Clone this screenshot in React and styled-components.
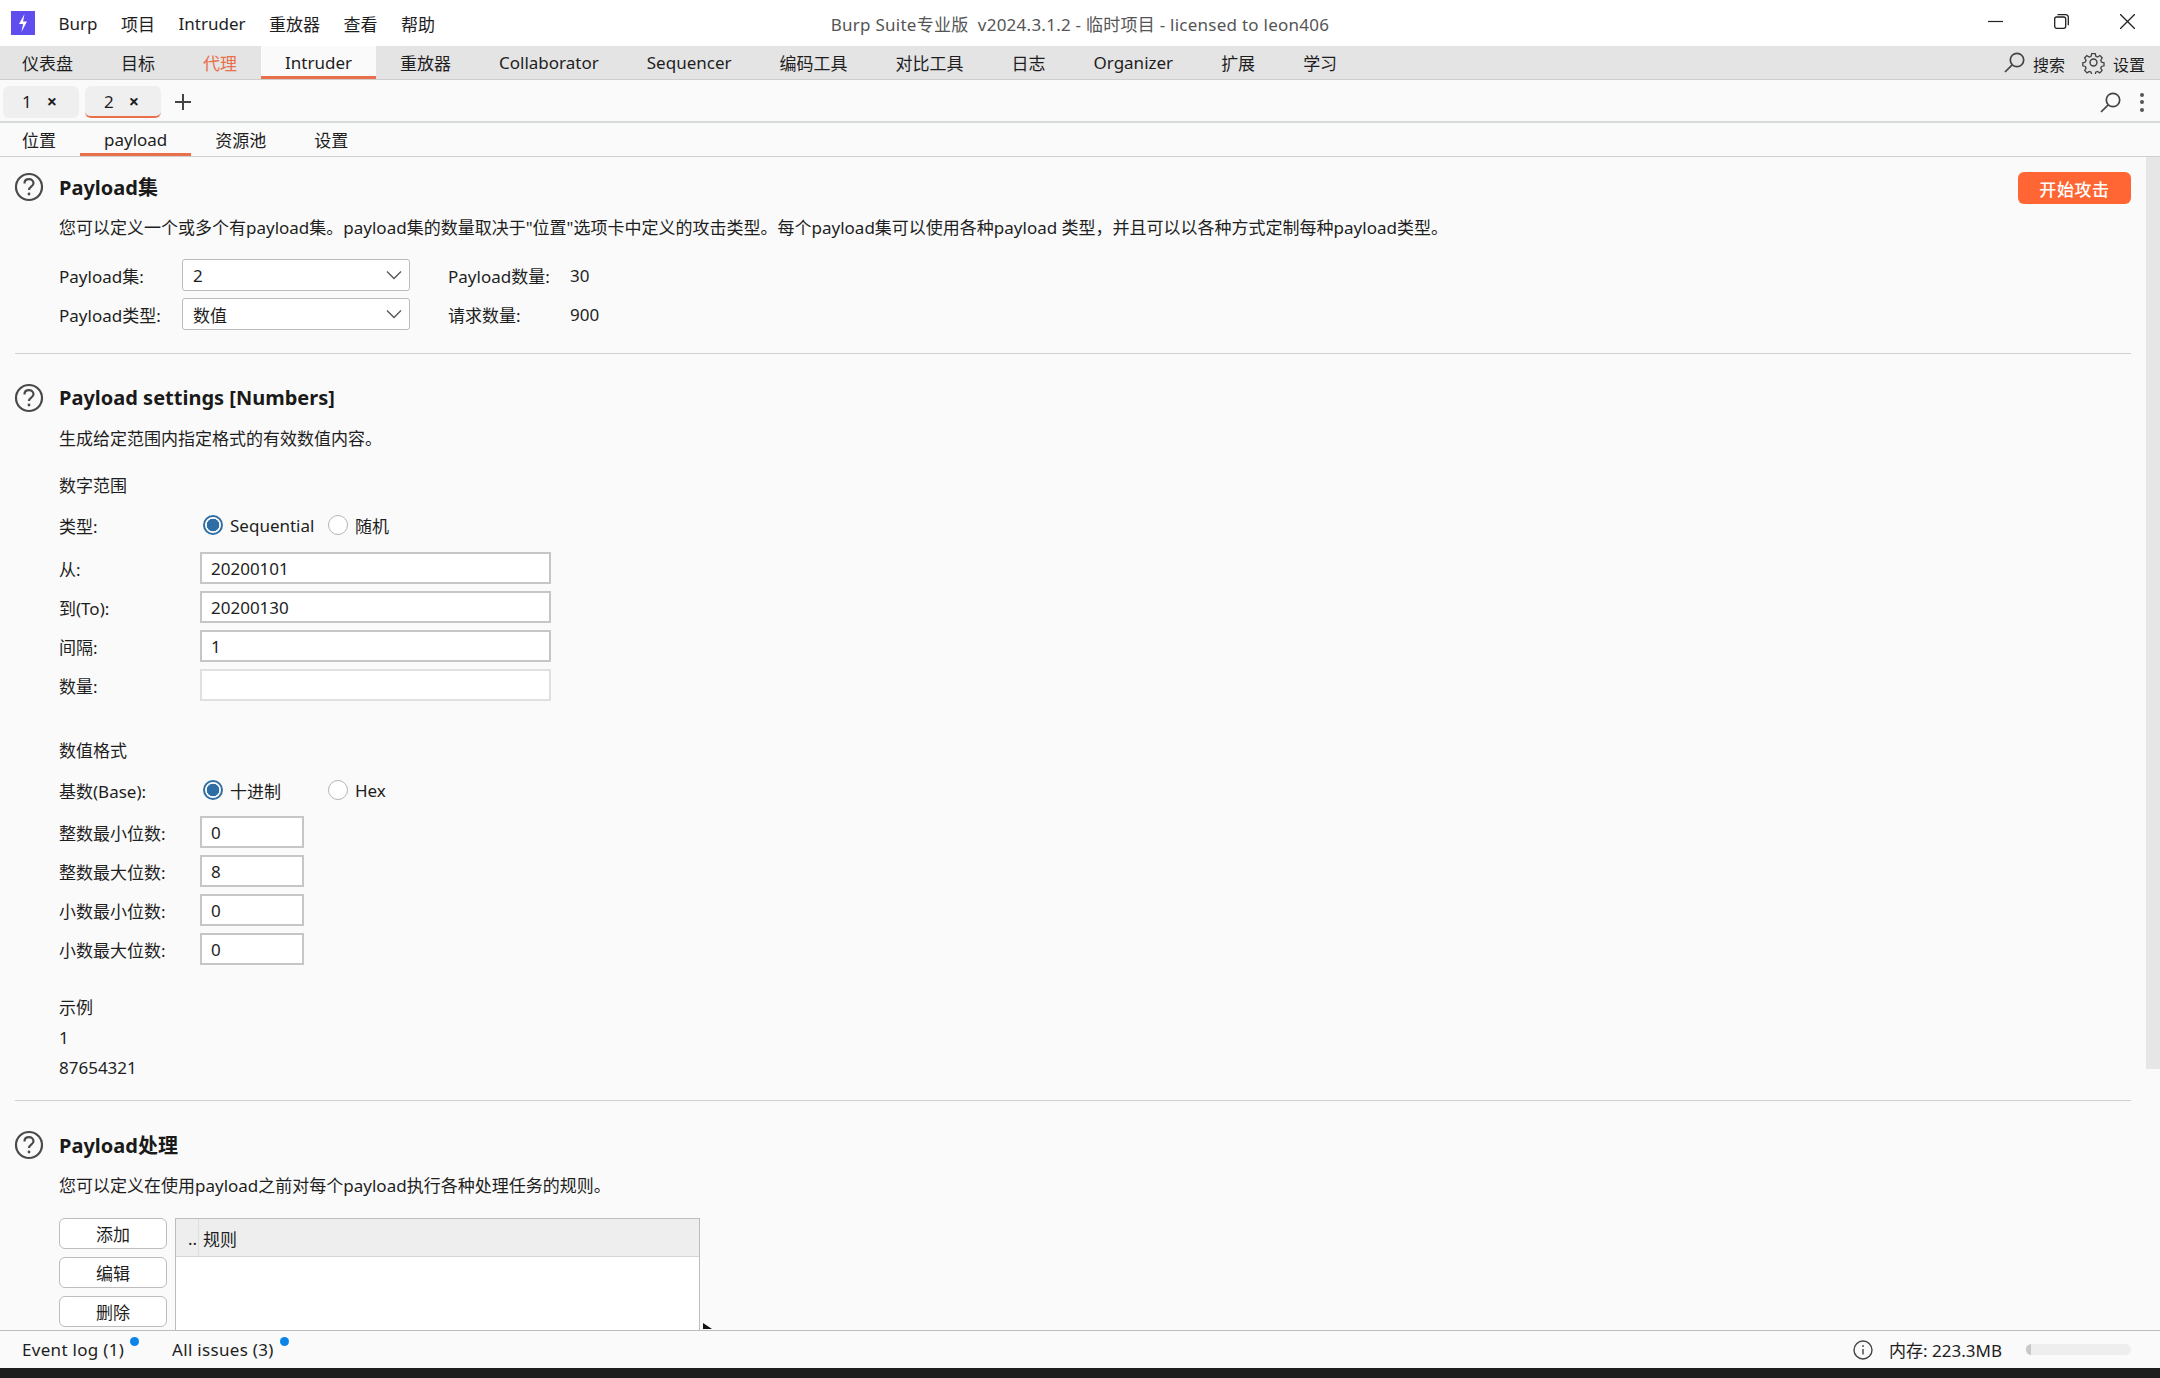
import React from "react";
import styled, { createGlobalStyle } from "styled-components";

const GlobalStyle = createGlobalStyle`
  html, body { margin: 0; padding: 0; height: 100%; overflow: hidden; }
  body {
    background: #fafafa;
    color: #1e1e1e;
    font-family: "Noto Sans", "Noto Sans CJK SC", sans-serif;
    font-size: 17px;
  }
  * { box-sizing: border-box; }
`;

const menuItems = ["Burp", "项目", "Intruder", "重放器", "查看", "帮助"];
const mainTabs = ["仪表盘", "目标", "代理", "Intruder", "重放器", "Collaborator", "Sequencer", "编码工具", "对比工具", "日志", "Organizer", "扩展", "学习"];
const subTabs = ["位置", "payload", "资源池", "设置"];

const HelpIcon = () => (
  <svg width="30" height="30" viewBox="0 0 30 30" fill="none" stroke="#4a4a4a">
    <circle cx="15" cy="15" r="13" strokeWidth="2.2" />
    <path d="M10.5 11.5c0-2.7 2-4.3 4.5-4.3s4.5 1.6 4.5 4c0 3.4-4.5 3.6-4.5 6.8" strokeWidth="2.2" />
    <circle cx="15" cy="22" r="1.4" fill="#4a4a4a" stroke="none" />
  </svg>
);

const SearchIcon = ({ size = 21 }) => (
  <svg width={size} height={size} viewBox="0 0 21 21" fill="none" stroke="#444" strokeWidth="1.7">
    <circle cx="13" cy="8" r="6.7" />
    <path d="M8.2 12.8 1 20" />
  </svg>
);

const GearIcon = () => (
  <svg width="23" height="23" viewBox="0 0 24 24" fill="none" stroke="#444" strokeWidth="1.5">
    <circle cx="12" cy="12" r="3.6" />
    <path d="M10 1.6h4l.7 3.1 2 .9 2.8-1.7 2.6 2.8-1.7 2.7.8 2-.0.1 3 .9v3.4l-3 .8-.8 2 1.6 2.7-2.7 2.7-2.7-1.6-2 .8-.7 2.9h-4l-.7-2.9-2-.8-2.7 1.6-2.7-2.7 1.6-2.7-.8-2-3-.8v-3.4l3-.9.8-2-1.7-2.8 2.6-2.7 2.8 1.7 2-.9z" transform="translate(1.2 1.2) scale(.9)" />
  </svg>
);

const Chevron = () => (
  <svg width="16" height="10" viewBox="0 0 16 10" fill="none" stroke="#555" strokeWidth="1.3">
    <path d="M1 1.5 8 8.5l7-7" />
  </svg>
);

const Logo = () => (
  <svg width="24" height="24" viewBox="0 0 24 24">
    <rect width="24" height="24" fill="#5f4dee" />
    <path d="M13.5 3 8 13h4l-1.5 8 5.5-10.5h-4z" fill="#fff" />
  </svg>
);

const Page = styled.div`
  height: 100vh;
  display: flex;
  flex-direction: column;
  overflow: hidden;
`;

const TitleBar = styled.div`
  height: 46px;
  flex: none;
  background: #fff;
  display: grid;
  grid-template-columns: 1fr auto 1fr;
  align-items: center;
`;

const MenuGroup = styled.div`
  display: flex;
  align-items: center;
  padding-left: 11px;
  gap: 23.5px;
  & > svg { margin-right: 0; }
`;

const MenuItem = styled.span``;

const WindowTitle = styled.div`
  color: #555;
  white-space: pre;
  letter-spacing: 0.25px;
`;

const WindowControls = styled.div`
  display: flex;
  justify-content: flex-end;
  align-items: center;
  gap: 51px;
  padding-right: 25px;
  height: 46px;
  padding-bottom: 4px;
`;

const MainTabBar = styled.div`
  height: 34px;
  flex: none;
  display: flex;
  background: #e4e4e4;
  border-bottom: 1px solid #cfcfcf;
`;

const MainTab = styled.div`
  padding: 0 24px;
  height: 33px;
  display: flex;
  align-items: center;
  white-space: nowrap;
  color: ${(p) => (p.$accent ? "#e8704a" : "#1e1e1e")};
  background: ${(p) => (p.$active ? "#fafafa" : "transparent")};
  border-bottom: 3px solid ${(p) => (p.$active ? "#e8704a" : "transparent")};
  padding-top: 3px;
  &:first-child { margin-left: -2px; }
`;

const BarTools = styled.div`
  margin-left: auto;
  display: flex;
  align-items: center;
  padding-right: 15px;
  font-size: 16px;
`;

const BarText = styled.span`
  margin-left: 8px;
  margin-right: ${(p) => p.$gap || 0}px;
  position: relative;
  top: 1px;
`;

const RepeaterRow = styled.div`
  height: 43px;
  flex: none;
  display: flex;
  align-items: center;
  gap: 6px;
  padding: 3px 0 0 3px;
  border-bottom: 2px solid #d6dada;
`;

const TabChip = styled.div`
  width: 76px;
  height: 32px;
  background: #efefef;
  border-radius: 6px;
  display: flex;
  align-items: center;
  gap: 15px;
  padding-left: 19px;
  border-bottom: 2px solid ${(p) => (p.$active ? "#e8704a" : "transparent")};
`;

const CloseMark = styled.span`
  font-size: 18px;
  font-weight: 700;
  line-height: 1;
`;

const PlusMark = styled.span`
  margin-left: 8px;
  width: 16px;
  height: 16px;
  position: relative;
  &::before, &::after {
    content: "";
    position: absolute;
    background: #444;
  }
  &::before { left: 7px; top: 0; width: 2px; height: 16px; }
  &::after { left: 0; top: 7px; width: 16px; height: 2px; }
`;

const RowTools = styled.div`
  margin-left: auto;
  display: flex;
  align-items: center;
  gap: 19px;
  padding-right: 16px;
`;

const DotColumn = styled.div`
  display: flex;
  flex-direction: column;
  gap: 3.5px;
  & > i {
    width: 4px;
    height: 4px;
    border-radius: 50%;
    background: #555;
  }
`;

const SubTabBar = styled.div`
  height: 34px;
  flex: none;
  display: flex;
  border-bottom: 1px solid #cfcfcf;
`;

const SubTab = styled.div`
  padding: 0 24px;
  display: flex;
  align-items: center;
  height: 33px;
  border-bottom: 3px solid ${(p) => (p.$active ? "#e8704a" : "transparent")};
  padding-top: 3px;
  &:first-child { margin-left: -2px; }
`;

const Body = styled.div`
  flex: 1;
  min-height: 0;
  display: flex;
  overflow: hidden;
`;

const Content = styled.div`
  flex: 1;
  min-width: 0;
  padding: 15px 15px 0;
`;

const Thumb = styled.div`
  width: 14px;
  height: 912px;
  flex: none;
  background: #e6e6e6;
`;

const HeaderRow = styled.div`
  height: 28px;
  display: flex;
  align-items: center;
  margin-top: ${(p) => p.$top || 0}px;
  position: relative;
`;

const HelpSlot = styled.div`
  width: 45px;
  display: flex;
  margin-left: -1px;
  padding-top: 2px;
`;

const SectionTitle = styled.h2`
  margin: 0;
  font-size: 20px;
  font-weight: 700;
  color: #1a1a1a;
`;

const AttackButton = styled.button`
  margin: 4px 0 0 auto;
  width: 113px;
  height: 32px;
  background: #ff6633;
  color: #fff;
  border: none;
  border-radius: 6px;
  font: inherit;
  font-weight: 500;
  letter-spacing: 0.6px;
  padding: 0;
`;

const Text = styled.div`
  margin-left: 44px;
  margin-top: ${(p) => p.$top || 0}px;
  height: 24px;
  line-height: 25px;
  white-space: nowrap;
`;

const Divider = styled.hr`
  margin: ${(p) => p.$top}px 0 0;
  border: none;
  height: 1px;
  background: #d0d0d0;
`;

const FormRow = styled.div`
  margin-left: 44px;
  margin-top: ${(p) => p.$top || 0}px;
  height: ${(p) => p.$height || 32}px;
  display: flex;
  align-items: center;
`;

const FieldLabel = styled.div`
  width: ${(p) => p.$width}px;
  flex: none;
  white-space: nowrap;
`;

const SelectBox = styled.div`
  width: 228px;
  height: 32px;
  background: #fff;
  border: 1px solid #bcbcbc;
  border-radius: 3px;
  display: flex;
  align-items: center;
  justify-content: space-between;
  padding: 0 7px 0 10px;
`;

const StatLabel = styled.div`
  margin-left: 38px;
  width: 122px;
  white-space: nowrap;
`;

const TextField = styled.input`
  width: ${(p) => p.$width}px;
  height: 32px;
  background: #fff;
  border: 2px solid ${(p) => (p.$faint ? "#e0e0e0" : "#c6c6c6")};
  padding: 0 9px;
  font: inherit;
  color: #1e1e1e;
  outline: none;
`;

const RadioItem = styled.div`
  width: ${(p) => p.$width}px;
  display: flex;
  align-items: center;
  gap: 7px;
  padding-left: 3px;
  white-space: nowrap;
`;

const RadioDot = styled.span`
  width: 20px;
  height: 20px;
  flex: none;
  border-radius: 50%;
  border: ${(p) => (p.$on ? "2px solid #2f6ea5" : "1px solid #b5b5b5")};
  background: ${(p) => (p.$on ? "radial-gradient(circle, #2f6ea5 0 6px, #fff 6.6px)" : "#fff")};
`;

const TableArea = styled.div`
  margin: 21px 0 0 44px;
  display: flex;
  gap: 8px;
  position: relative;
  height: 115px;
`;

const ButtonColumn = styled.div`
  display: flex;
  flex-direction: column;
  gap: 8px;
`;

const SideButton = styled.button`
  width: 108px;
  height: 31px;
  background: #fff;
  border: 1px solid #bdbdbd;
  border-radius: 6px;
  font: inherit;
  color: #1e1e1e;
  padding: 0;
`;

const RuleTable = styled.div`
  width: 525px;
  height: 115px;
  background: #fff;
  border: 1px solid #bdbdbd;
  border-bottom: none;
`;

const RuleHead = styled.div`
  height: 38px;
  background: #eeeeee;
  border-bottom: 1px solid #d5d5d5;
  display: flex;
`;

const RuleCol = styled.div`
  width: ${(p) => p.$width}px;
  padding-left: ${(p) => p.$pad}px;
  display: flex;
  align-items: center;
  border-right: ${(p) => (p.$sep ? "1px solid #dedede" : "none")};
  padding-top: 2px;
`;

const ResizeCorner = styled.span`
  position: absolute;
  left: 644px;
  bottom: 4px;
  width: 0;
  height: 0;
  border-left: 9px solid #111;
  border-top: 6px solid transparent;
`;

const Footer = styled.div`
  height: 38px;
  flex: none;
  border-top: 1px solid #bdbdbd;
  background: #fafafa;
  display: flex;
  align-items: center;
  padding: 0 29px 0 22px;
  z-index: 1;
`;

const FooterItem = styled.span`
  position: relative;
  margin-right: 48px;
  letter-spacing: 0.3px;
  &::after {
    content: "";
    position: absolute;
    right: -15px;
    top: -1px;
    width: 9px;
    height: 9px;
    border-radius: 50%;
    background: #0a84e8;
  }
`;

const Memory = styled.div`
  margin-left: auto;
  display: flex;
  align-items: center;
  gap: 16px;
`;

const MemoryBar = styled.div`
  width: 105px;
  height: 11px;
  margin-left: 8px;
  border-radius: 6px;
  background: #eeeeee;
  overflow: hidden;
  & > i {
    display: block;
    height: 100%;
    background: #c8c8c8;
  }
`;

const TaskStrip = styled.div`
  height: 10px;
  flex: none;
  background: #1e1e1e;
`;

const numberFields = [
  ["从:", "20200101"],
  ["到(To):", "20200130"],
  ["间隔:", "1"],
  ["数量:", ""],
];

const digitFields = [
  ["整数最小位数:", "0"],
  ["整数最大位数:", "8"],
  ["小数最小位数:", "0"],
  ["小数最大位数:", "0"],
];

const App = () => {
  return (
    <Page>
      <GlobalStyle />
      <TitleBar>
        <MenuGroup>
          <Logo />
          {menuItems.map((item) => (
            <MenuItem key={item}>{item}</MenuItem>
          ))}
        </MenuGroup>
        <WindowTitle>Burp Suite专业版  v2024.3.1.2 - 临时项目 - licensed to leon406</WindowTitle>
        <WindowControls>
          <svg width="15" height="15" viewBox="0 0 15 15" stroke="#222" strokeWidth="1.2"><path d="M0 7.5h15" /></svg>
          <svg width="15" height="15" viewBox="0 0 15 15" fill="none" stroke="#222" strokeWidth="1.3"><rect x=".7" y="3" width="11" height="11.3" rx="2" /><path d="M3.5.7h8.3a2.5 2.5 0 0 1 2.5 2.5v8" /></svg>
          <svg width="15" height="15" viewBox="0 0 15 15" stroke="#222" strokeWidth="1.3"><path d="M0 0l15 15M15 0 0 15" /></svg>
        </WindowControls>
      </TitleBar>

      <MainTabBar>
        {mainTabs.map((tab) => (
          <MainTab key={tab} $active={tab === "Intruder"} $accent={tab === "代理"}>{tab}</MainTab>
        ))}
        <BarTools>
          <SearchIcon />
          <BarText $gap={17}>搜索</BarText>
          <GearIcon />
          <BarText>设置</BarText>
        </BarTools>
      </MainTabBar>

      <RepeaterRow>
        <TabChip>1<CloseMark>×</CloseMark></TabChip>
        <TabChip $active>2<CloseMark>×</CloseMark></TabChip>
        <PlusMark />
        <RowTools>
          <SearchIcon />
          <DotColumn><i /><i /><i /></DotColumn>
        </RowTools>
      </RepeaterRow>

      <SubTabBar>
        {subTabs.map((tab) => (
          <SubTab key={tab} $active={tab === "payload"}>{tab}</SubTab>
        ))}
      </SubTabBar>

      <Body>
        <Content>
          <HeaderRow>
            <HelpSlot><HelpIcon /></HelpSlot>
            <SectionTitle>Payload集</SectionTitle>
            <AttackButton>开始攻击</AttackButton>
          </HeaderRow>
          <Text $top={15}>您可以定义一个或多个有payload集。payload集的数量取决于"位置"选项卡中定义的攻击类型。每个payload集可以使用各种payload 类型，并且可以以各种方式定制每种payload类型。</Text>
          <FormRow $top={20}>
            <FieldLabel $width={123}>Payload集:</FieldLabel>
            <SelectBox>2<Chevron /></SelectBox>
            <StatLabel>Payload数量:</StatLabel>
            <span>30</span>
          </FormRow>
          <FormRow $top={7}>
            <FieldLabel $width={123}>Payload类型:</FieldLabel>
            <SelectBox>数值<Chevron /></SelectBox>
            <StatLabel>请求数量:</StatLabel>
            <span>900</span>
          </FormRow>
          <Divider $top={23} />

          <HeaderRow $top={29}>
            <HelpSlot><HelpIcon /></HelpSlot>
            <SectionTitle>Payload settings [Numbers]</SectionTitle>
          </HeaderRow>
          <Text $top={15}>生成给定范围内指定格式的有效数值内容。</Text>
          <Text $top={23}>数字范围</Text>
          <FormRow $top={16} $height={24}>
            <FieldLabel $width={141}>类型:</FieldLabel>
            <RadioItem $width={125}><RadioDot $on />Sequential</RadioItem>
            <RadioItem><RadioDot />随机</RadioItem>
          </FormRow>
          {numberFields.map(([label, value], i) => (
            <FormRow key={label} $top={i === 0 ? 15 : 7}>
              <FieldLabel $width={141}>{label}</FieldLabel>
              <TextField $width={351} $faint={!value} value={value} readOnly />
            </FormRow>
          ))}
          <Text $top={37}>数值格式</Text>
          <FormRow $top={16} $height={24}>
            <FieldLabel $width={141}>基数(Base):</FieldLabel>
            <RadioItem $width={125}><RadioDot $on />十进制</RadioItem>
            <RadioItem><RadioDot />Hex</RadioItem>
          </FormRow>
          {digitFields.map(([label, value], i) => (
            <FormRow key={label} $top={i === 0 ? 14 : 7}>
              <FieldLabel $width={141}>{label}</FieldLabel>
              <TextField $width={104} value={value} readOnly />
            </FormRow>
          ))}
          <Text $top={30}>示例</Text>
          <Text $top={6}>1</Text>
          <Text $top={6}>87654321</Text>
          <Divider $top={21} />

          <HeaderRow $top={29}>
            <HelpSlot><HelpIcon /></HelpSlot>
            <SectionTitle>Payload处理</SectionTitle>
          </HeaderRow>
          <Text $top={15}>您可以定义在使用payload之前对每个payload执行各种处理任务的规则。</Text>
          <TableArea>
            <ButtonColumn>
              <SideButton>添加</SideButton>
              <SideButton>编辑</SideButton>
              <SideButton>删除</SideButton>
            </ButtonColumn>
            <RuleTable>
              <RuleHead>
                <RuleCol $width={23} $pad={12} $sep>..</RuleCol>
                <RuleCol $pad={4}>规则</RuleCol>
              </RuleHead>
            </RuleTable>
            <ResizeCorner />
          </TableArea>
        </Content>
        <Thumb />
      </Body>

      <Footer>
        <FooterItem>Event log (1)</FooterItem>
        <FooterItem>All issues (3)</FooterItem>
        <Memory>
          <svg width="20" height="20" viewBox="0 0 20 20" fill="none" stroke="#444" strokeWidth="1.4">
            <circle cx="10" cy="10" r="9" />
            <path d="M10 9v5.5" />
            <circle cx="10" cy="6" r=".9" fill="#444" stroke="none" />
          </svg>
          <span>内存: 223.3MB</span>
          <MemoryBar><i style={{ width: "5%" }} /></MemoryBar>
        </Memory>
      </Footer>
      <TaskStrip />
    </Page>
  );
};

export default App;
